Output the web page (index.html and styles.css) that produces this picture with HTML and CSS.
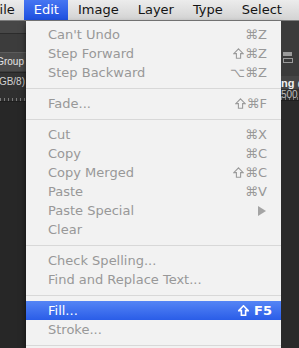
FILE: index.html
```html
<!DOCTYPE html>
<html lang="en">
<head>
    <meta charset="UTF-8">
    <meta name="viewport" content="width=device-width, initial-scale=1.0">
    <title>Edit Menu</title>
    <link rel="stylesheet" href="styles.css">
</head>
<body>
    <div class="menubar">
        <span class="menubar-item first">File</span>
        <span class="menubar-item active">Edit</span>
        <span class="menubar-item">Image</span>
        <span class="menubar-item">Layer</span>
        <span class="menubar-item">Type</span>
        <span class="menubar-item">Select</span>
    </div>

    <div class="workspace">
        <div class="side side-left">
            <div class="toolbar"></div>
            <div class="options">
                <div class="group-btn"><span>Group</span></div>
            </div>
            <div class="doc-tab"><span>RGB/8)</span></div>
            <div class="ruler"></div>
        </div>

        <ul class="menu">
            <li class="menu-item"><span>Can't Undo</span><span class="shortcut">⌘Z</span></li>
            <li class="menu-item">
                <span>Step Forward</span>
                <span class="shortcut"><svg class="shift" width="11" height="11" viewBox="0 0 11 11"><polygon points="5.5,0.8 10.2,5.6 7.6,5.6 7.6,10.2 3.4,10.2 3.4,5.6 0.8,5.6"/></svg>⌘Z</span>
            </li>
            <li class="menu-item"><span>Step Backward</span><span class="shortcut">⌥⌘Z</span></li>
            <li class="separator"></li>
            <li class="menu-item">
                <span>Fade...</span>
                <span class="shortcut"><svg class="shift" width="11" height="11" viewBox="0 0 11 11"><polygon points="5.5,0.8 10.2,5.6 7.6,5.6 7.6,10.2 3.4,10.2 3.4,5.6 0.8,5.6"/></svg>⌘F</span>
            </li>
            <li class="separator"></li>
            <li class="menu-item"><span>Cut</span><span class="shortcut">⌘X</span></li>
            <li class="menu-item"><span>Copy</span><span class="shortcut">⌘C</span></li>
            <li class="menu-item">
                <span>Copy Merged</span>
                <span class="shortcut"><svg class="shift" width="11" height="11" viewBox="0 0 11 11"><polygon points="5.5,0.8 10.2,5.6 7.6,5.6 7.6,10.2 3.4,10.2 3.4,5.6 0.8,5.6"/></svg>⌘C</span>
            </li>
            <li class="menu-item"><span>Paste</span><span class="shortcut">⌘V</span></li>
            <li class="menu-item">
                <span>Paste Special</span>
                <svg class="submenu-arrow" width="9" height="10" viewBox="0 0 9 10"><polygon points="1,0 9,5 1,10" fill="#a4a4a4"/></svg>
            </li>
            <li class="menu-item"><span>Clear</span></li>
            <li class="separator"></li>
            <li class="menu-item"><span>Check Spelling...</span></li>
            <li class="menu-item"><span>Find and Replace Text...</span></li>
            <li class="separator"></li>
            <li class="menu-item selected">
                <span>Fill...</span>
                <span class="shortcut"><svg class="shift" width="11" height="11" viewBox="0 0 11 11"><polygon points="5.5,0.8 10.2,5.6 7.6,5.6 7.6,10.2 3.4,10.2 3.4,5.6 0.8,5.6"/></svg> F5</span>
            </li>
            <li class="menu-item"><span>Stroke...</span></li>
            <li class="separator"></li>
        </ul>

        <div class="side side-right">
            <div class="panel-top">
                <svg class="panel-icon" width="10" height="11" viewBox="0 0 10 11">
                    <rect x="0" y="0" width="9" height="4" fill="#9a9a9a"/>
                    <rect x="0.5" y="6.5" width="9" height="4" fill="none" stroke="#9a9a9a"/>
                </svg>
            </div>
            <div class="doc-title">ng @</div>
            <div class="ruler ruler-right">500</div>
        </div>
    </div>
</body>
</html>
```

FILE: styles.css
```css
body {
    margin: 0;
    padding: 0;
    width: 299px;
    height: 348px;
    overflow: hidden;
    background-color: #262626;
    font-family: 'DejaVu Sans', 'Liberation Sans', sans-serif;
}

.menubar {
    display: flex;
    height: 20px;
    border-bottom: 1px solid #7c7c7c;
    background: linear-gradient(to bottom, #ececec, #d3d3d3);
    white-space: nowrap;
    overflow: hidden;
}

.menubar-item {
    padding: 0 9.5px;
    line-height: 20px;
    font-size: 13px;
    color: #141414;
}

.menubar-item.first {
    margin-left: -16.5px;
}

.menubar-item.active {
    background: linear-gradient(to bottom, #4676f2, #1e50e0);
    color: #ffffff;
}

.workspace {
    display: flex;
    height: 327px;
}

.side {
    overflow: hidden;
    white-space: nowrap;
    font-family: 'Liberation Sans', sans-serif;
    font-size: 10px;
}

.side-left {
    width: 26px;
    flex-shrink: 0;
    background-color: #272727;
}

.toolbar {
    height: 12px;
    background-color: #474747;
    border-bottom: 1px solid #2c2c2c;
}

.options {
    height: 39px;
    background-color: #3c3c3c;
    padding-top: 18px;
    box-sizing: border-box;
    border-bottom: 1px solid #262626;
}

.group-btn {
    display: flex;
    justify-content: flex-end;
    height: 19px;
    line-height: 18px;
    padding-right: 2px;
    background-color: #4b4b4b;
    border-top: 1px solid #5c5c5c;
    color: #e6e6e6;
    box-sizing: border-box;
    overflow: hidden;
}

.doc-tab {
    display: flex;
    justify-content: flex-end;
    height: 17px;
    line-height: 17px;
    padding-right: 1px;
    background-color: #333333;
    color: #d2d2d2;
    overflow: hidden;
}

.ruler {
    height: 11px;
    background: repeating-linear-gradient(to right, #7a7a7a 0, #7a7a7a 1px, transparent 1px, transparent 4px) bottom / 100% 3px no-repeat, #2f2f2f;
    border-bottom: 1px solid #1e1e1e;
}

.menu {
    width: 255px;
    flex-shrink: 0;
    margin: 0;
    padding: 4px 0 0;
    list-style: none;
    background-color: #f2f2f2;
    box-shadow: 0 3px 6px rgba(0, 0, 0, 0.6);
    font-size: 13px;
    color: #989898;
}

.menu-item {
    display: flex;
    justify-content: space-between;
    align-items: center;
    height: 19px;
    line-height: 19px;
    padding: 0 14px 0 22px;
    white-space: nowrap;
}

.shortcut {
    display: flex;
    align-items: center;
}

.shift {
    margin-right: 1px;
    fill: none;
    stroke: #9a9a9a;
    stroke-width: 1.1;
    stroke-linejoin: miter;
}

.menu-item.selected {
    background: linear-gradient(to bottom, #5585f5, #2a5de8);
    color: #ffffff;
}

.menu-item.selected .shortcut {
    font-weight: bold;
    margin-right: -5px;
    white-space: pre;
}

.menu-item.selected .shift {
    stroke: #ffffff;
    stroke-width: 1.6;
}

.submenu-arrow {
    margin-right: 1px;
}

.separator {
    height: 1px;
    margin: 6px 0 5px;
    background-color: #d8d8d8;
}

.side-right {
    flex: 1;
    background-color: #2a2a2a;
}

.panel-top {
    height: 55px;
    background-color: #3b3b3b;
    padding: 31px 0 0 2px;
    box-sizing: border-box;
}

.panel-icon {
    display: block;
}

.doc-title {
    height: 13px;
    line-height: 14px;
    background-color: #454545;
    color: #f0f0f0;
    font-weight: bold;
    font-size: 11px;
}

.ruler-right {
    line-height: 11px;
    color: #bdbdbd;
    font-size: 10px;
}
```
